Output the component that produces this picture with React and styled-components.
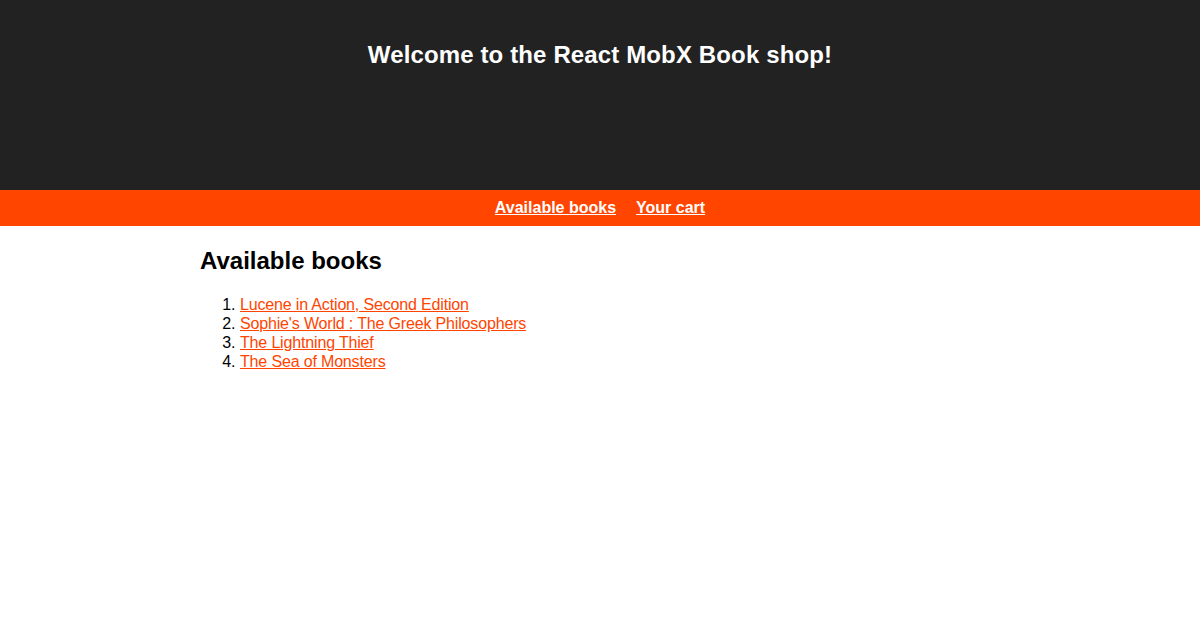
import React from "react";
import styled, { createGlobalStyle } from "styled-components";

const Global = createGlobalStyle`
  html, body { margin: 0; padding: 0; background: #fff; }
  body { font-family: "Liberation Sans", Arial, sans-serif; color: #000; }
`;

const Header = styled.header`
  background: #222222;
  height: 190px;
  box-sizing: border-box;
  padding-top: 41px;
  text-align: center;
`;

const Title = styled.h1`
  margin: 0;
  color: #fff;
  font-size: 24px;
  line-height: 28px;
  font-weight: bold;
  letter-spacing: 0.13px;
`;

const Nav = styled.nav`
  background: #ff4500;
  height: 36px;
  display: flex;
  align-items: center;
  justify-content: center;
  gap: 20px;
`;

const NavLink = styled.a`
  color: #fff;
  font-weight: bold;
  font-size: 16px;
  text-decoration: underline;
`;

const Main = styled.main`
  width: 800px;
  margin: 0 auto;
  padding-top: 21px;
`;

const Heading = styled.h2`
  margin: 0 0 20px;
  font-size: 24px;
  line-height: 28px;
  font-weight: bold;
`;

const List = styled.ol`
  margin: 0;
  padding-left: 40px;
  font-size: 16px;
  line-height: 19px;
`;

const BookLink = styled.a`
  color: #ff4500;
  text-decoration: underline;
  letter-spacing: -0.16px;
`;

const books = [
  "Lucene in Action, Second Edition",
  "Sophie's World : The Greek Philosophers",
  "The Lightning Thief",
  "The Sea of Monsters",
];

export default function App() {
  return (
    <>
      <Global />
      <Header>
        <Title>Welcome to the React MobX Book shop!</Title>
      </Header>
      <Nav>
        <NavLink href="#">Available books</NavLink>
        <NavLink href="#">Your cart</NavLink>
      </Nav>
      <Main>
        <Heading>Available books</Heading>
        <List>
          {books.map((b) => (
            <li key={b}>
              <BookLink href="#">{b}</BookLink>
            </li>
          ))}
        </List>
      </Main>
    </>
  );
}
